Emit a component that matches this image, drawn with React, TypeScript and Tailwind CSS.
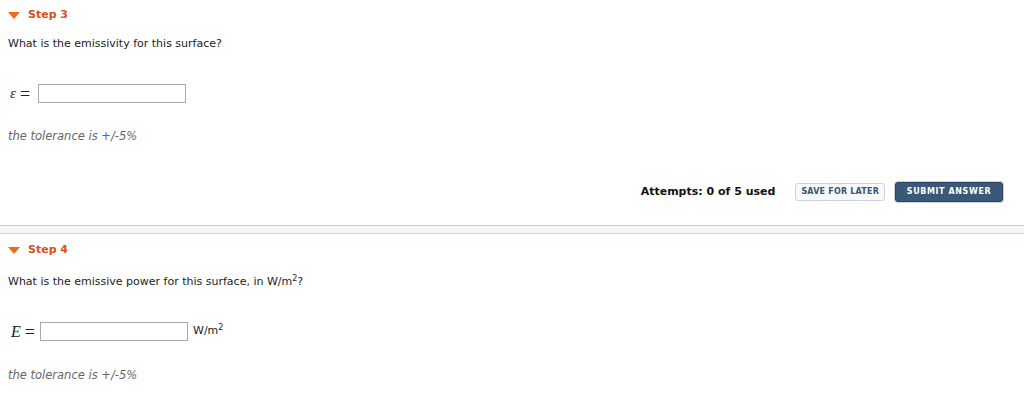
import React from "react";

function Caret() {
  return (
    <svg width="12" height="7" viewBox="0 0 12 7" className="shrink-0">
      <polygon points="0,0 12,0 6,7" fill="#f06a1c" />
    </svg>
  );
}

function StepHeader({ label }: { label: string }) {
  return (
    <div className="flex items-center gap-[8px] pl-[8px] h-[14px]">
      <Caret />
      <span className="text-[11px] leading-[14px] font-bold text-[#d4511c]">{label}</span>
    </div>
  );
}

export default function App() {
  return (
    <div className="w-[1024px] h-[403px] bg-white text-[#333] overflow-hidden" style={{ fontFamily: '"DejaVu Sans", Verdana, sans-serif' }}>
      {/* Step 3 */}
      <div className="pt-[8px]">
        <StepHeader label="Step 3" />
        <p className="pl-[8px] mt-[15px] text-[11px] leading-[14px] text-[#222]">What is the emissivity for this surface?</p>
        <div className="flex items-center mt-[33px] pl-[10px] h-[19px]">
          <span className="flex items-center w-[28px] text-[#222] font-['Liberation_Serif',serif]">
            <span className="text-[15px] italic leading-none">ε</span>
            <span className="text-[18px] leading-none ml-[4px]">=</span>
          </span>
          <div className="w-[148px] h-[19px] border border-[#a9a9a9] bg-white" />
        </div>
        <p className="pl-[8px] mt-[26px] text-[11.5px] italic text-[#666] leading-[14px]">the tolerance is +/-5%</p>
        <div className="flex items-center justify-end pr-[21px] mt-[39px] h-[20px]">
          <span className="text-[11px] font-bold text-[#111] mr-[20px]">Attempts: 0 of 5 used</span>
          <button className="h-[18px] px-[5px] text-[8px] font-bold text-[#3b5472] bg-[#f7f9fb] border border-[#c9d3df] rounded-[3px] mr-[10px] tracking-[0.2px]">SAVE FOR LATER</button>
          <button className="h-[20px] w-[108px] text-[8px] font-bold text-white bg-[#3a5878] border border-[#2c4560] rounded-[3px] shadow-[0_0_0_1px_#c9d3df] tracking-[0.6px]">SUBMIT ANSWER</button>
        </div>
      </div>
      {/* separator */}
      <div className="mt-[23px] h-[9px] border-t border-b border-[#c8d1dc] bg-[#f4f7fa]" />
      {/* Step 4 */}
      <div className="pt-[9px]">
        <StepHeader label="Step 4" />
        <p className="pl-[8px] mt-[18px] text-[11px] leading-[14px] text-[#222]">What is the emissive power for this surface, in W/m<sup className="text-[8px]">2</sup>?</p>
        <div className="flex items-center mt-[33px] pl-[11px] h-[19px]">
          <span className="flex items-center w-[29px] text-[#222] font-['Liberation_Serif',serif]">
            <span className="text-[16px] italic leading-none">E</span>
            <span className="text-[18px] leading-none ml-[4px]">=</span>
          </span>
          <div className="w-[148px] h-[19px] border border-[#a9a9a9] bg-white" />
          <span className="ml-[5px] text-[11px] text-[#222]">W/m<sup className="text-[8px]">2</sup></span>
        </div>
        <p className="pl-[8px] mt-[27px] text-[11.5px] italic text-[#666] leading-[14px]">the tolerance is +/-5%</p>
      </div>
    </div>
  );
}
